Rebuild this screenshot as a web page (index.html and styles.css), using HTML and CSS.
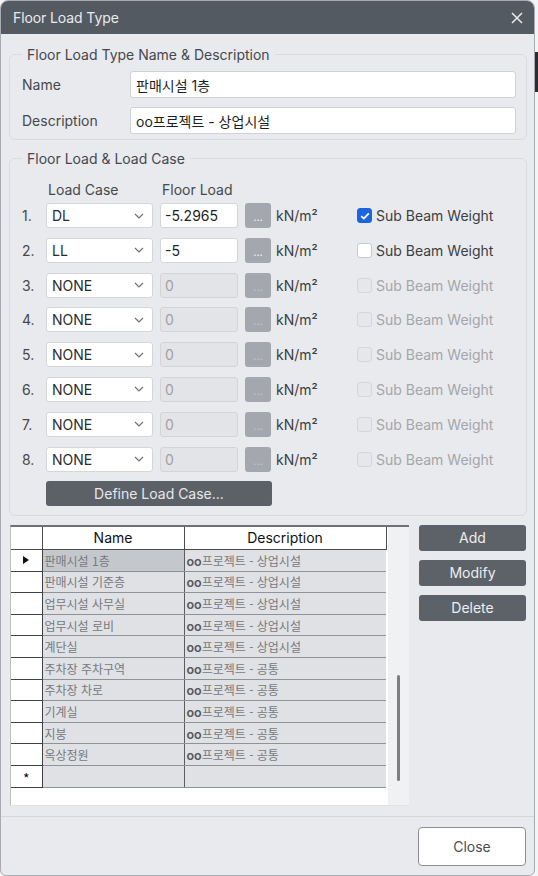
FILE: index.html
```html
<!DOCTYPE html>
<html lang="ko">
<head>
<meta charset="utf-8">
<title>Floor Load Type</title>
<link rel="stylesheet" href="styles.css">
</head>
<body>
<div class="desk-strip"></div>
<div class="dialog">
  <div class="titlebar">
    <span class="title">Floor Load Type</span>
    <svg class="close" width="12" height="12" viewBox="0 0 12 12"><path d="M1 1L11 11M11 1L1 11" stroke="#e6e7ea" stroke-width="1.6" fill="none"/></svg>
  </div>
  <div class="content">
    <fieldset class="group g1">
      <legend>Floor Load Type Name &amp; Description</legend>
      <div class="field"><span class="flabel">Name</span><div class="tinput">판매시설 1층</div></div>
      <div class="field"><span class="flabel">Description</span><div class="tinput">oo프로젝트 - 상업시설</div></div>
    </fieldset>

    <fieldset class="group g2">
      <legend>Floor Load &amp; Load Case</legend>
      <div class="lc-head"><span class="h-case">Load Case</span><span class="h-load">Floor Load</span></div>
      <div class="lc-rows">
        <div class="lc-row">
          <span class="num">1.</span>
          <div class="select">DL<svg class="chev" width="10" height="6" viewBox="0 0 10 6"><path d="M1 1l4 4 4-4" stroke="#6d7076" stroke-width="1.2" fill="none"/></svg></div>
          <div class="ninput">-5.2965</div>
          <div class="dots">...</div>
          <span class="unit">kN/m²</span>
          <span class="cb checked"><svg width="10" height="8" viewBox="0 0 10 8"><path d="M1.2 4.2l2.6 2.4L8.8 1.3" stroke="#fff" stroke-width="1.8" fill="none"/></svg></span>
          <span class="cblabel">Sub Beam Weight</span>
        </div>
        <div class="lc-row">
          <span class="num">2.</span>
          <div class="select">LL<svg class="chev" width="10" height="6" viewBox="0 0 10 6"><path d="M1 1l4 4 4-4" stroke="#6d7076" stroke-width="1.2" fill="none"/></svg></div>
          <div class="ninput">-5</div>
          <div class="dots">...</div>
          <span class="unit">kN/m²</span>
          <span class="cb"></span>
          <span class="cblabel">Sub Beam Weight</span>
        </div>
        <div class="lc-row off">
          <span class="num">3.</span>
          <div class="select">NONE<svg class="chev" width="10" height="6" viewBox="0 0 10 6"><path d="M1 1l4 4 4-4" stroke="#6d7076" stroke-width="1.2" fill="none"/></svg></div>
          <div class="ninput">0</div>
          <div class="dots">...</div>
          <span class="unit">kN/m²</span>
          <span class="cb"></span>
          <span class="cblabel">Sub Beam Weight</span>
        </div>
        <div class="lc-row off">
          <span class="num">4.</span>
          <div class="select">NONE<svg class="chev" width="10" height="6" viewBox="0 0 10 6"><path d="M1 1l4 4 4-4" stroke="#6d7076" stroke-width="1.2" fill="none"/></svg></div>
          <div class="ninput">0</div>
          <div class="dots">...</div>
          <span class="unit">kN/m²</span>
          <span class="cb"></span>
          <span class="cblabel">Sub Beam Weight</span>
        </div>
        <div class="lc-row off">
          <span class="num">5.</span>
          <div class="select">NONE<svg class="chev" width="10" height="6" viewBox="0 0 10 6"><path d="M1 1l4 4 4-4" stroke="#6d7076" stroke-width="1.2" fill="none"/></svg></div>
          <div class="ninput">0</div>
          <div class="dots">...</div>
          <span class="unit">kN/m²</span>
          <span class="cb"></span>
          <span class="cblabel">Sub Beam Weight</span>
        </div>
        <div class="lc-row off">
          <span class="num">6.</span>
          <div class="select">NONE<svg class="chev" width="10" height="6" viewBox="0 0 10 6"><path d="M1 1l4 4 4-4" stroke="#6d7076" stroke-width="1.2" fill="none"/></svg></div>
          <div class="ninput">0</div>
          <div class="dots">...</div>
          <span class="unit">kN/m²</span>
          <span class="cb"></span>
          <span class="cblabel">Sub Beam Weight</span>
        </div>
        <div class="lc-row off">
          <span class="num">7.</span>
          <div class="select">NONE<svg class="chev" width="10" height="6" viewBox="0 0 10 6"><path d="M1 1l4 4 4-4" stroke="#6d7076" stroke-width="1.2" fill="none"/></svg></div>
          <div class="ninput">0</div>
          <div class="dots">...</div>
          <span class="unit">kN/m²</span>
          <span class="cb"></span>
          <span class="cblabel">Sub Beam Weight</span>
        </div>
        <div class="lc-row off">
          <span class="num">8.</span>
          <div class="select">NONE<svg class="chev" width="10" height="6" viewBox="0 0 10 6"><path d="M1 1l4 4 4-4" stroke="#6d7076" stroke-width="1.2" fill="none"/></svg></div>
          <div class="ninput">0</div>
          <div class="dots">...</div>
          <span class="unit">kN/m²</span>
          <span class="cb"></span>
          <span class="cblabel">Sub Beam Weight</span>
        </div>
      </div>
      <div class="define">Define Load Case...</div>
    </fieldset>

    <div class="lower">
      <div class="gridwrap">
        <table class="grid">
          <colgroup><col class="c-rh"><col class="c-name"><col class="c-desc"></colgroup>
          <thead>
            <tr><th class="rh"></th><th>Name</th><th>Description</th></tr>
          </thead>
          <tbody>
            <tr class="sel"><td class="rh"><svg width="6" height="8" viewBox="0 0 6 8"><path d="M0 0L6 4L0 8Z" fill="#111"/></svg></td><td class="nm">판매시설 1층</td><td class="ds"><b>oo</b>프로젝트 - 상업시설</td></tr>
            <tr><td class="rh"></td><td class="nm">판매시설 기준층</td><td class="ds"><b>oo</b>프로젝트 - 상업시설</td></tr>
            <tr><td class="rh"></td><td class="nm">업무시설 사무실</td><td class="ds"><b>oo</b>프로젝트 - 상업시설</td></tr>
            <tr><td class="rh"></td><td class="nm">업무시설 로비</td><td class="ds"><b>oo</b>프로젝트 - 상업시설</td></tr>
            <tr><td class="rh"></td><td class="nm">계단실</td><td class="ds"><b>oo</b>프로젝트 - 상업시설</td></tr>
            <tr><td class="rh"></td><td class="nm">주차장 주차구역</td><td class="ds"><b>oo</b>프로젝트 - 공통</td></tr>
            <tr><td class="rh"></td><td class="nm">주차장 차로</td><td class="ds"><b>oo</b>프로젝트 - 공통</td></tr>
            <tr><td class="rh"></td><td class="nm">기계실</td><td class="ds"><b>oo</b>프로젝트 - 공통</td></tr>
            <tr><td class="rh"></td><td class="nm">지붕</td><td class="ds"><b>oo</b>프로젝트 - 공통</td></tr>
            <tr><td class="rh"></td><td class="nm">옥상정원</td><td class="ds"><b>oo</b>프로젝트 - 공통</td></tr>
            <tr class="newrow"><td class="rh">*</td><td class="nm"></td><td class="ds"></td></tr>
          </tbody>
        </table>
        <div class="vscroll"><div class="thumb"></div></div>
      </div>
      <div class="side">
        <div class="sbtn">Add</div>
        <div class="sbtn">Modify</div>
        <div class="sbtn">Delete</div>
      </div>
    </div>
  </div>
  <div class="footer">
    <div class="closebtn">Close</div>
  </div>
</div>
</body>
</html>
```

FILE: styles.css
```css
* { box-sizing: border-box; }
html, body { margin: 0; padding: 0; }
body {
  width: 538px;
  height: 876px;
  background: #f4f4f5;
  font-family: "Inter", "Noto Sans CJK KR", "Noto Sans", sans-serif;
  font-size: 14px;
  color: #33363b;
  position: relative;
  overflow: hidden;
}
.desk-strip {
  position: absolute;
  left: 535px;
  top: 52px;
  width: 3px;
  height: 40px;
  background: #2a2c30;
}
.dialog {
  width: 535px;
  height: 876px;
  background: #e9eaed;
  border: 1px solid #a8abb1;
  border-radius: 8px 8px 6px 6px;
  overflow: hidden;
  display: flex;
  flex-direction: column;
}
.titlebar {
  height: 33px;
  flex: none;
  background: #545a62;
  display: flex;
  align-items: center;
  justify-content: space-between;
  padding: 0 11px 0 12px;
}
.title {
  color: #e9eaec;
  font-size: 14px;
  letter-spacing: -0.1px;
}
.close { display: block; }

.content {
  flex: 1;
  padding: 12px 7px 0 8px;
  display: flex;
  flex-direction: column;
}

.group {
  margin: 0;
  border: 1px solid #d9dbe0;
  border-radius: 6px;
  min-width: 0;
}
.group legend {
  margin-left: 0;
  padding: 0 5px;
  font-size: 14px;
  line-height: 17px;
  color: #45484d;
}
.g1 { padding: 0 10px 5px 12px; }
.field {
  display: flex;
  align-items: center;
  height: 27px;
  margin-top: 9px;
}
.g1 .field:first-of-type { margin-top: 8px; }
.flabel {
  width: 108px;
  color: #45484d;
  font-size: 14px;
}
.tinput {
  flex: 1;
  height: 27px;
  background: #fff;
  border: 1px solid #cfd2d7;
  border-radius: 3px;
  padding: 0 5px;
  display: flex;
  align-items: center;
  font-size: 14px;
  color: #1d1f22;
}

.g2 {
  margin-top: 10px;
  padding: 0 10px 9px 12px;
}
.lc-head {
  display: flex;
  margin-top: 14px;
  line-height: 17px;
  color: #45484d;
}
.h-case { margin-left: 26px; width: 114px; }
.lc-rows {
  margin-top: 5px;
  display: flex;
  flex-direction: column;
  gap: 9.8px;
}
.lc-row {
  display: flex;
  align-items: center;
  height: 25px;
}
.num { width: 24px; color: #45484d; }
.select {
  width: 107px;
  height: 25px;
  background: #fff;
  border: 1px solid #d3d6da;
  border-radius: 3px;
  padding: 0 8px 0 5px;
  display: flex;
  align-items: center;
  justify-content: space-between;
  color: #2a2c30;
}
.chev { display: block; }
.ninput {
  width: 78px;
  height: 25px;
  margin-left: 7px;
  background: #fff;
  border: 1px solid #d3d6da;
  border-radius: 3px;
  padding: 0 4px;
  display: flex;
  align-items: center;
  color: #1d1f22;
}
.dots {
  width: 26px;
  height: 25px;
  margin-left: 7px;
  background: #a4a7ad;
  border-radius: 3px;
  color: #f4f5f6;
  font-size: 11px;
  display: flex;
  align-items: center;
  justify-content: center;
  padding-top: 3px;
}
.unit { margin-left: 5px; width: 81px; color: #3b3e43; }
.cb {
  width: 15px;
  height: 15px;
  border: 1px solid #c6c9ce;
  background: #fff;
  border-radius: 3px;
  display: flex;
  align-items: center;
  justify-content: center;
}
.cb.checked { background: #1b65de; border-color: #1b65de; }
.cblabel { margin-left: 4px; color: #3b3e43; }

.off .ninput { background: #e3e4e8; border-color: #d2d4d8; color: #9ea1a6; }
.off .dots { color: #c4c6ca; }
.off .cb { background: #e6e7ea; border-color: #d4d6da; }
.off .cblabel { color: #a3a6ab; }

.define {
  margin: 9px 0 0 24px;
  width: 226px;
  height: 25px;
  background: #5c6168;
  border-radius: 3px;
  color: #e6e7ea;
  display: flex;
  align-items: center;
  justify-content: center;
}

.lower {
  display: flex;
  margin-top: 9px;
  padding-left: 1px;
}
.gridwrap {
  width: 399px;
  height: 281px;
  background: #fff;
  border-top: 2px solid #6d7076;
  border-left: 1px solid #b9bcc1;
  border-bottom: 1px solid #e1e2e5;
  display: flex;
  align-items: flex-start;
}
.grid {
  border-collapse: collapse;
  table-layout: fixed;
  width: 375px;
  font-size: 12px;
}
.c-rh { width: 31px; }
.c-name { width: 142px; }
.c-desc { width: 202px; }
.grid th {
  height: 23px;
  background: #fff;
  font-weight: 400;
  font-size: 14px;
  color: #111;
  border: 1.5px solid #4a4c50;
  border-top: 0;
  padding: 0;
  text-align: center;
}
.grid th.rh { border-left: 0; }
.grid td {
  height: 21.6px;
  padding: 0 0 0 2px;
  background: #dfe1e5;
  border-bottom: 1px solid #8f9297;
  color: #76797e;
  white-space: nowrap;
  overflow: hidden;
  font-family: "Noto Sans CJK KR", sans-serif;
}
.grid td.nm { border-right: 1px solid #5a5c60; }
.grid td.ds b { font-family: "Inter", sans-serif; font-weight: 600; color: #55585d; font-size: 12.5px; }
.grid td.rh {
  background: #fff;
  border: 1.5px solid #3f4145;
  border-left: 0;
  padding: 0;
  text-align: center;
  color: #111;
  font-size: 13px;
}
.grid td.rh svg { display: block; margin: 0 0 0 12px; }
.grid tr.sel td.nm { background: #c4c8cd; }
.newrow td.rh { font-size: 14px; line-height: 1; padding-top: 4px; }
.vscroll {
  width: 23px;
  height: 100%;
  background: #f0f1f2;
  margin-left: 1px;
  display: flex;
  justify-content: center;
  padding-top: 148px;
}
.thumb {
  width: 3px;
  height: 106px;
  background: #7b7e83;
  border-radius: 2px;
}

.side {
  margin-left: 10px;
  display: flex;
  flex-direction: column;
  gap: 9px;
  margin-top: 0;
}
.sbtn {
  width: 107px;
  height: 26px;
  background: #5d6269;
  border-radius: 3px;
  color: #eceef0;
  display: flex;
  align-items: center;
  justify-content: center;
}

.footer {
  flex: none;
  height: 59px;
  border-top: 1px solid #d4d6da;
  display: flex;
  justify-content: flex-end;
  align-items: flex-start;
  padding: 10px 8px 0 0;
}
.closebtn {
  width: 108px;
  height: 39px;
  background: #fff;
  border: 1px solid #8b8e94;
  border-radius: 4px;
  display: flex;
  align-items: center;
  justify-content: center;
  color: #4a4d52;
}
```
